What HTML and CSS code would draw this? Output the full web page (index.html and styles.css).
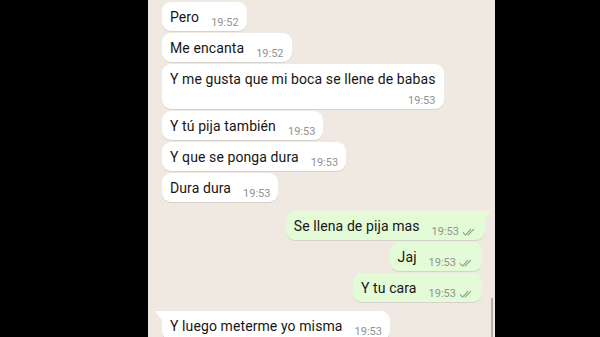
FILE: index.html
```html
<!DOCTYPE html>
<html lang="es">
<head>
<meta charset="utf-8">
<title>Chat</title>
<link rel="stylesheet" href="styles.css">
</head>
<body>
<div class="chat">
  <div class="bubble in"><span class="txt">Pero</span><span class="meta">19:52</span></div>
  <div class="bubble in"><span class="txt">Me encanta</span><span class="meta">19:52</span></div>
  <div class="bubble in multi"><span class="txt">Y me gusta que mi boca se llene de babas</span><span class="meta">19:53</span></div>
  <div class="bubble in"><span class="txt">Y tú pija también</span><span class="meta">19:53</span></div>
  <div class="bubble in"><span class="txt">Y que se ponga dura</span><span class="meta">19:53</span></div>
  <div class="bubble in"><span class="txt">Dura dura</span><span class="meta">19:53</span></div>

  <div class="bubble out tail group"><span class="txt">Se llena de pija mas</span><span class="meta">19:53<svg class="ticks" viewBox="0 0 16 10" width="15" height="9"><path d="M1 5.2l2.6 2.6L9.4 1.6M6.4 7.8l6.2-6.2"/></svg></span></div>
  <div class="bubble out"><span class="txt">Jaj</span><span class="meta">19:53<svg class="ticks" viewBox="0 0 16 10" width="15" height="9"><path d="M1 5.2l2.6 2.6L9.4 1.6M6.4 7.8l6.2-6.2"/></svg></span></div>
  <div class="bubble out"><span class="txt">Y tu cara</span><span class="meta">19:53<svg class="ticks" viewBox="0 0 16 10" width="15" height="9"><path d="M1 5.2l2.6 2.6L9.4 1.6M6.4 7.8l6.2-6.2"/></svg></span></div>

  <div class="bubble in tail group"><span class="txt">Y luego meterme yo misma</span><span class="meta">19:53</span></div>
  <div class="scrollbar"></div>
</div>
</body>
</html>
```

FILE: styles.css
```css
html, body {
  margin: 0;
  padding: 0;
  background: #000;
  width: 600px;
  height: 337px;
  overflow: hidden;
}

.chat {
  position: relative;
  margin-left: 148px;
  width: 347px;
  height: 337px;
  box-sizing: border-box;
  background: #efe9e2;
  padding: 2px 13px 0 14px;
  display: flex;
  flex-direction: column;
  align-items: flex-start;
  gap: 2px;
  overflow: hidden;
  font-family: Roboto, "Noto Sans", sans-serif;
}

.bubble {
  position: relative;
  display: flex;
  align-items: flex-end;
  height: 29px;
  box-sizing: border-box;
  padding: 6px 8px 2px 8px;
  border-radius: 9px;
  background: #fff;
  box-shadow: 0 1px 0.5px rgba(0, 0, 0, 0.1);
  color: #161616;
}

.bubble.out {
  align-self: flex-end;
  background: #e4fbd7;
  padding-right: 8px;
}

.bubble.group {
  margin-top: 7px;
}

.txt {
  font-size: 14px;
  line-height: 18px;
  padding-bottom: 3px;
  white-space: nowrap;
  letter-spacing: 0.1px;
}

.meta {
  display: flex;
  align-items: center;
  margin-left: 12px;
  font-size: 11px;
  line-height: 12px;
  color: #929292;
  white-space: nowrap;
}

.ticks {
  margin-left: 3px;
  fill: none;
  stroke: #8f9f90;
  stroke-width: 1.2;
  stroke-linecap: round;
  stroke-linejoin: round;
}

.bubble.multi {
  height: 45px;
  flex-direction: column;
  align-items: stretch;
  padding-right: 9px;
}

.bubble.multi .txt {
  padding-bottom: 0;
}

.bubble.multi .meta {
  align-self: flex-end;
  margin-top: 7px;
  margin-left: 0;
}

.bubble.in.tail {
  border-top-left-radius: 0;
}

.bubble.in.tail::before {
  content: "";
  position: absolute;
  top: 0;
  left: -7px;
  border-top: 9px solid #fff;
  border-left: 7px solid transparent;
}

.bubble.out.tail {
  border-top-right-radius: 0;
  margin-right: -3px;
}

.bubble.out.tail::after {
  content: "";
  position: absolute;
  top: 0;
  right: -6px;
  border-top: 9px solid #e4fbd7;
  border-right: 6px solid transparent;
}

.scrollbar {
  position: absolute;
  right: 2px;
  top: 298px;
  width: 2px;
  height: 39px;
  background: #b3aea8;
}
```
